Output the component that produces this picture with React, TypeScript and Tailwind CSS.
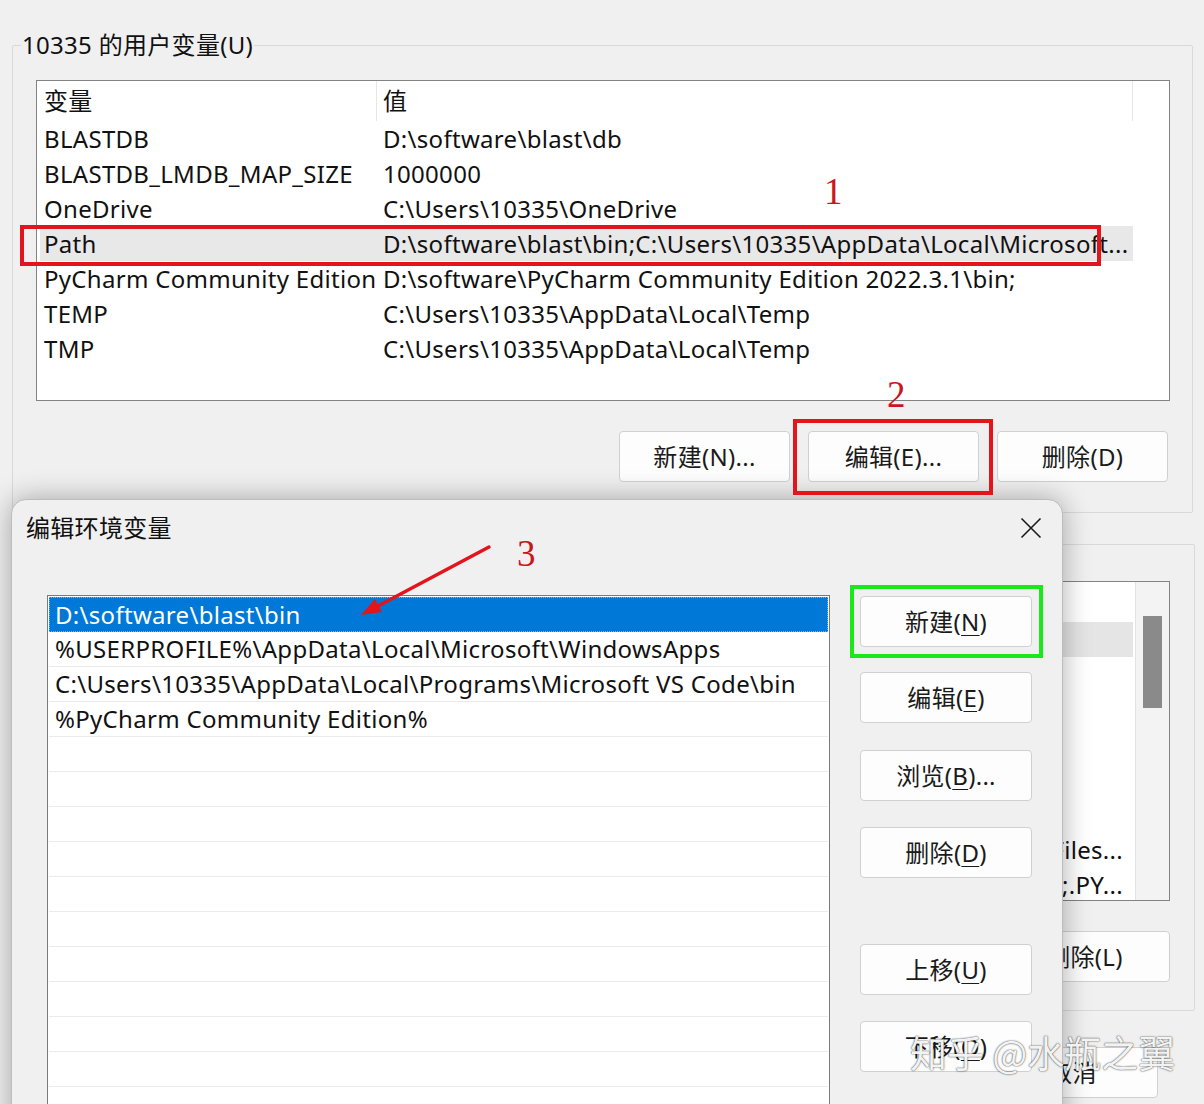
import React from "react";

const F = "font-['Noto_Sans','Noto_Sans_CJK_SC',sans-serif] tracking-[0.3px]";

function Btn({ children, className = "" }: { children: React.ReactNode; className?: string }) {
  return (
    <div
      className={`flex h-[51px] w-[171px] shrink-0 items-center justify-center rounded-[4px] border border-[#d0d0d0] bg-[#fdfdfd] text-[24px] text-[#1a1a1a] ${className}`}
    >
      {children}
    </div>
  );
}

function U({ children }: { children: React.ReactNode }) {
  return <span className="underline decoration-1 underline-offset-[4px]">{children}</span>;
}

const userVars: [string, string][] = [
  ["BLASTDB", "D:\\software\\blast\\db"],
  ["BLASTDB_LMDB_MAP_SIZE", "1000000"],
  ["OneDrive", "C:\\Users\\10335\\OneDrive"],
  ["Path", "D:\\software\\blast\\bin;C:\\Users\\10335\\AppData\\Local\\Microsoft..."],
  ["PyCharm Community Edition", "D:\\software\\PyCharm Community Edition 2022.3.1\\bin;"],
  ["TEMP", "C:\\Users\\10335\\AppData\\Local\\Temp"],
  ["TMP", "C:\\Users\\10335\\AppData\\Local\\Temp"],
];

const sysVars: [string, string, boolean][] = [
  ["ComSpec", "C:\\WINDOWS\\system32\\cmd.exe", false],
  ["DriverData", "C:\\Windows\\System32\\Drivers\\DriverData", false],
  ["JAVA_HOME", "C:\\Program Files\\Java\\jdk", false],
  ["MAVEN_HOME", "D:\\software\\maven", false],
  ["NUMBER_OF_PROCESSORS", "16", false],
  ["OS", "Windows_NT", false],
  ["Path", "C:\\Program Files\\Common Files\\Oracle\\Java\\javapath;C:\\Program Files...", true],
  ["PATHEXT", ".COM;.EXE;.BAT;.CMD;.VBS;.VBE;.JS;.JSE;.WSF;.WSH;.MSC;.PY...", true],
];

const pathItems = [
  "D:\\software\\blast\\bin",
  "%USERPROFILE%\\AppData\\Local\\Microsoft\\WindowsApps",
  "C:\\Users\\10335\\AppData\\Local\\Programs\\Microsoft VS Code\\bin",
  "%PyCharm Community Edition%",
  "", "", "", "", "", "", "", "", "", "", "", "",
];

export default function App() {
  return (
    <div className={`relative h-[1104px] w-[1204px] overflow-hidden bg-[#f0f0f0] text-[#111] ${F}`}>
      {/* ===== Background window: user variables group ===== */}
      <div className="relative ml-[12px] mt-[45px] h-[468px] w-[1181px] rounded-[2px] border border-[#d9d9d9]">
        <div className="absolute left-[8px] top-[-16px] bg-[#f0f0f0] px-[1px] text-[24px] leading-[30px]">
          10335 的用户变量(U)
        </div>
        <div className="ml-[23px] mt-[34px] h-[321px] w-[1134px] border border-[#838383] bg-white">
          <div className="flex h-[40px] text-[24px]">
            <div className="flex w-[340px] items-center border-r border-[#e6e6e6] pl-[7px]">变量</div>
            <div className="flex w-[756px] items-center border-r border-[#e6e6e6] pl-[6px]">值</div>
          </div>
          {userVars.map(([k, v]) => (
            <div
              key={k}
              className={`ml-[3px] flex h-[35px] w-[1093px] items-center text-[24px] ${k === "Path" ? "bg-[#e8e8e8]" : ""}`}
            >
              <div className="w-[337px] shrink-0 whitespace-nowrap pl-[4px]">{k}</div>
              <div className="whitespace-nowrap pl-[6px]">{v}</div>
            </div>
          ))}
        </div>
        <div className="mt-[30px] flex justify-end gap-[18px] pr-[24px]">
          <Btn>新建(N)...</Btn>
          <Btn>编辑(E)...</Btn>
          <Btn>删除(D)</Btn>
        </div>
      </div>

      {/* ===== Background window: system variables group ===== */}
      <div className="relative ml-[12px] mt-[31px] h-[467px] w-[1183px] rounded-[2px] border border-[#d9d9d9]">
        <div className="absolute left-[8px] top-[-16px] bg-[#f0f0f0] px-[1px] text-[24px] leading-[30px]">
          系统变量(S)
        </div>
        <div className="ml-[23px] mt-[36px] flex h-[320px] w-[1134px] border border-[#838383] bg-white">
          <div className="flex-1 overflow-hidden">
            <div className="flex h-[40px] text-[24px]">
              <div className="flex w-[340px] items-center pl-[7px]">变量</div>
              <div className="flex items-center pl-[6px]">值</div>
            </div>
            {sysVars.map(([k, v, tail], i) => (
              <div
                key={k}
                className={`ml-[3px] flex h-[35px] w-[1093px] items-center text-[24px] ${i === 0 ? "bg-[#e5e5e5]" : ""}`}
              >
                <div className="w-[337px] shrink-0 whitespace-nowrap pl-[4px]">{k}</div>
                {tail ? (
                  <div className="flex flex-1 justify-end overflow-hidden pr-[10px]">
                    <span className="whitespace-nowrap">{v}</span>
                  </div>
                ) : (
                  <div className="whitespace-nowrap pl-[6px]">{v}</div>
                )}
              </div>
            ))}
          </div>
          <div className="w-[34px] shrink-0 border-l border-[#e3e3e3] bg-[#f3f3f3] pt-[34px]">
            <div className="ml-[7px] h-[92px] w-[19px] bg-[#8a8a8a]" />
          </div>
        </div>
        <div className="mt-[30px] flex justify-end gap-[18px] pr-[24px]">
          <Btn>新建(W)...</Btn>
          <Btn>编辑(I)...</Btn>
          <Btn>删除(L)</Btn>
        </div>
      </div>
      <div className="mt-[36px] flex justify-end gap-[18px] pr-[46px]">
        <Btn>确定</Btn>
        <Btn>取消</Btn>
      </div>

      {/* ===== Foreground dialog ===== */}
      <div className="absolute left-[11px] top-[499px] flex h-[640px] w-[1052px] flex-col rounded-t-[15px] border border-[#bdbdbd] bg-[#f0f0f0] shadow-[0_0_28px_rgba(0,0,0,0.32)]">
        <div className="flex h-[56px] shrink-0 items-center justify-between pl-[14px] pr-[20px]">
          <span className="text-[24px]">编辑环境变量</span>
          <svg width="22" height="22" viewBox="0 0 22 22">
            <path d="M1.5 1.5 L20.5 20.5 M20.5 1.5 L1.5 20.5" stroke="#1a1a1a" strokeWidth="1.6" fill="none" />
          </svg>
        </div>
        <div className="mt-[39px] flex gap-[30px] pl-[35px]">
          <div className="h-[600px] w-[783px] shrink-0 border border-[#7a7a7a] bg-white pt-[1px]">
            {pathItems.map((p, i) => (
              <div
                key={i}
                className={`flex h-[35px] items-center text-[24px] ${
                  i === 0
                    ? "mx-[1px] border border-dotted border-[#9ab] bg-[#0078d7] pl-[5px] text-white"
                    : "mx-[1px] border-b border-[#ebebeb] pl-[6px]"
                }`}
              >
                <span className="whitespace-nowrap">{p}</span>
              </div>
            ))}
          </div>
          <div className="flex w-[172px] flex-col pt-[1px]">
            <Btn className="w-[172px]">
              新建(<U>N</U>)
            </Btn>
            <Btn className="mt-[25px] w-[172px]">
              编辑(<U>E</U>)
            </Btn>
            <Btn className="mt-[27px] w-[172px]">
              浏览(<U>B</U>)...
            </Btn>
            <Btn className="mt-[26px] w-[172px]">
              删除(<U>D</U>)
            </Btn>
            <Btn className="mt-[66px] w-[172px]">
              上移(<U>U</U>)
            </Btn>
            <Btn className="mt-[26px] w-[172px]">
              下移(<U>O</U>)
            </Btn>
          </div>
        </div>
      </div>

      {/* ===== Annotations ===== */}
      <div className="absolute left-[20px] top-[225px] h-[41px] w-[1081px] border-[4px] border-[#e3141c]" />
      <div className="absolute left-[793px] top-[419px] h-[76px] w-[200px] border-[4px] border-[#e3141c]" />
      <div className="absolute left-[850px] top-[585px] h-[73px] w-[193px] border-[4px] border-[#1be81b]" />

      <div className="absolute left-[824px] top-[170px] font-['Liberation_Serif',serif] text-[37px] leading-[44px] text-[#c9161d]">1</div>
      <div className="absolute left-[887px] top-[373px] font-['Liberation_Serif',serif] text-[37px] leading-[44px] text-[#c9161d]">2</div>
      <div className="absolute left-[517px] top-[532px] font-['Liberation_Serif',serif] text-[37px] leading-[44px] text-[#c9161d]">3</div>

      <svg className="pointer-events-none absolute left-0 top-0" width="1204" height="1104" viewBox="0 0 1204 1104">
        <line x1="489" y1="547" x2="378" y2="606" stroke="#e3141c" strokeWidth="3.5" strokeLinecap="round" />
        <polygon points="361,615 382,612 375,599" fill="#e3141c" />
      </svg>

      <div className="pointer-events-none absolute left-[910px] top-[1026px] whitespace-nowrap font-['Noto_Sans_CJK_SC',sans-serif] text-[37px] leading-[52px] tracking-[0px] text-white/95 [text-shadow:0_0_2px_rgba(0,0,0,0.6),0_0_1px_rgba(0,0,0,0.5)]">
        知乎 @水瓶之翼
      </div>
    </div>
  );
}
